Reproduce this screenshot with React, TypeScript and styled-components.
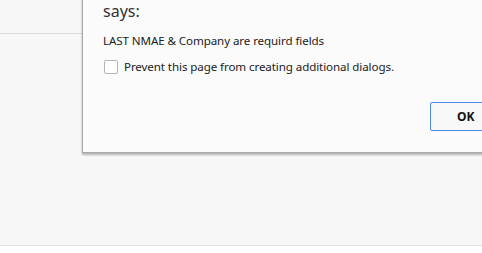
import React from "react";
import styled, { createGlobalStyle } from "styled-components";

const GlobalStyle = createGlobalStyle`
  html, body {
    margin: 0;
    padding: 0;
    background: #ffffff;
    overflow: hidden;
  }
  * { box-sizing: border-box; }
`;

const Page = styled.div`
  position: relative;
  width: 482px;
  height: 253px;
  overflow: hidden;
  font-family: "Noto Sans", "Open Sans", sans-serif;
`;

const Body = styled.div`
  height: 246px;
  background: #f7f7f7;
  border-bottom: 1px solid #e4e4e4;
`;

const HeaderBar = styled.div`
  height: 34px;
  border-bottom: 1px solid #dcdcdc;
`;

const Dialog = styled.div`
  position: absolute;
  left: 82px;
  top: -40px;
  width: 440px;
  height: 193px;
  background: #fbfbfb;
  border: 1px solid #a9a9a9;
  box-shadow: 0 2px 2px rgba(0, 0, 0, 0.28);
  padding: 39px 0 0 20px;
  display: flex;
  flex-direction: column;
`;

const Title = styled.div`
  font-size: 16px;
  line-height: 22px;
  color: #333;
`;

const Message = styled.div`
  margin-top: 11px;
  font-size: 11.6px;
  letter-spacing: -0.1px;
  line-height: 16px;
  color: #222;
`;

const CheckRow = styled.label`
  margin-top: 10px;
  display: flex;
  align-items: center;
  gap: 6px;
  font-size: 11.6px;
  letter-spacing: -0.1px;
  line-height: 16px;
  color: #222;
`;

const Box = styled.span`
  width: 14px;
  height: 14px;
  margin-left: 1px;
  border: 1px solid #b5b5b5;
  border-radius: 2px;
  background: #fff;
`;

const Footer = styled.div`
  margin-top: 27px;
  display: flex;
  padding-left: 327px;
`;

const OkButton = styled.button`
  width: 80px;
  height: 29px;
  border: 1px solid #4d88ea;
  border-radius: 2px;
  background: #f8f8f8;
  font-family: inherit;
  font-size: 12px;
  font-weight: 700;
  color: #111;
  text-align: left;
  padding-left: 26px;
`;

export default function App() {
  return (
    <>
      <GlobalStyle />
      <Page>
        <Body>
          <HeaderBar />
        </Body>
        <Dialog>
          <Title>says:</Title>
          <Message>LAST NMAE &amp; Company are requird fields</Message>
          <CheckRow>
            <Box />
            Prevent this page from creating additional dialogs.
          </CheckRow>
          <Footer>
            <OkButton>OK</OkButton>
          </Footer>
        </Dialog>
      </Page>
    </>
  );
}
